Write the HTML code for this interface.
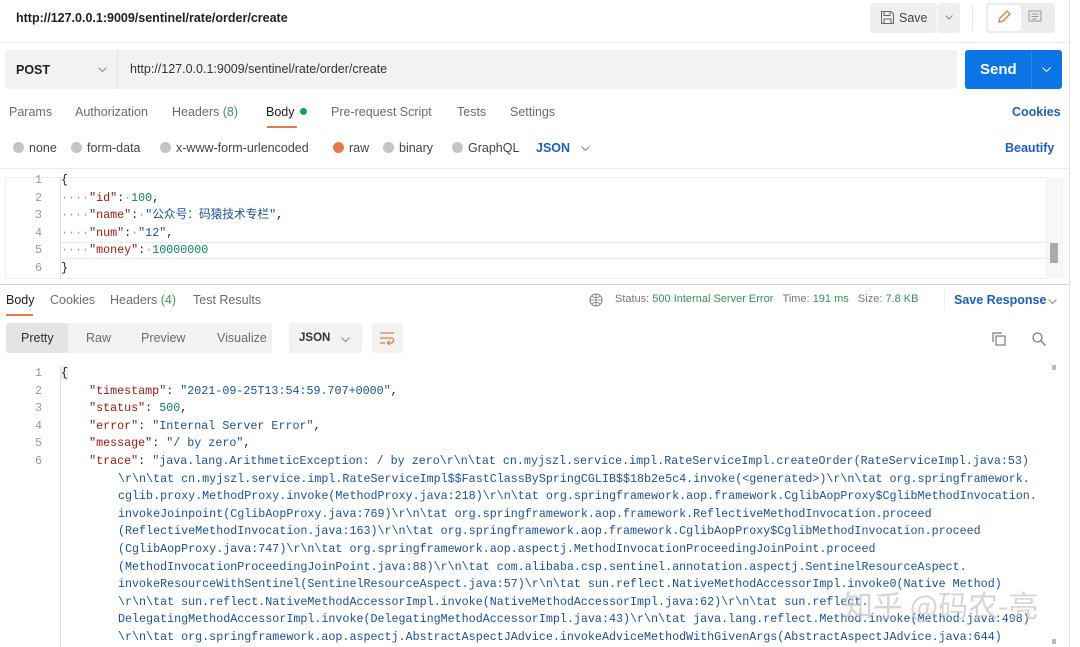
<!DOCTYPE html>
<html><head><meta charset="utf-8"><style>
*{margin:0;padding:0;box-sizing:border-box}
body{width:1080px;height:647px;overflow:hidden;background:#fff;font-family:"Liberation Sans","Noto Sans CJK SC",sans-serif;color:#212121;position:relative}
.a{position:absolute;white-space:nowrap}
.t{font-size:12.5px;color:#6b6b6b}
.m{font-family:"Liberation Mono","Noto Sans CJK SC",monospace;font-size:11.7px;line-height:17.6px}
.k{color:#a31515}.s{color:#1c4f9c}.n{color:#098658}.g{color:#9a9a9a}
.dot{display:inline-block;width:11px;height:11px;border-radius:50%;background:#c4c4c4;vertical-align:-1px;margin-right:5px}
.blue{color:#1d5fbf;font-weight:bold;font-size:12.5px}
.cv{display:inline-block;vertical-align:1px}
</style></head><body>
<div class="a" style="left:1069px;top:0;width:1px;height:647px;background:#e2e2e2"></div>
<div class="a" style="left:16px;top:11px;font-size:12.5px;font-weight:bold">http://127.0.0.1:9009/sentinel/rate/order/create</div>
<div class="a" style="left:870px;top:3px;width:67px;height:30px;background:#efefef;border-radius:3px"></div>
<svg class="a" style="left:880px;top:10px" width="15" height="15" viewBox="0 0 15 15"><path d="M1.5 1.5h9.5l2.5 2.5v9.5h-12z M4 1.5v4h6v-4 M4 13.5v-4.5h7v4.5" fill="none" stroke="#666" stroke-width="1"/></svg>
<div class="a" style="left:899px;top:11px;font-size:12.5px;color:#444">Save</div>
<div class="a" style="left:938px;top:3px;width:22px;height:30px;background:#efefef;border-radius:3px"></div>
<svg class="a" style="left:945px;top:15px" width="8" height="5" viewBox="0 0 8 5"><path d="M.5.5l3.5 3.5 3.5-3.5" fill="none" stroke="#888"/></svg>
<div class="a" style="left:972px;top:6px;width:1px;height:24px;background:#e6e6e6"></div>
<div class="a" style="left:986px;top:3px;width:69px;height:30px;background:#ececec;border-radius:3px"></div>
<div class="a" style="left:988px;top:5px;width:33px;height:26px;background:#fff;border-radius:3px"></div>
<svg class="a" style="left:996px;top:9px" width="16" height="16" viewBox="0 0 16 16"><path d="M3 13l1-4 7-7 3 3-7 7z" fill="none" stroke="#e07a4a" stroke-width="1.3"/></svg>
<svg class="a" style="left:1028px;top:10px" width="14" height="14" viewBox="0 0 14 14"><path d="M1 1h12v10h-12z M3.5 4h7 M3.5 6.5h7 M3.5 9h5" fill="none" stroke="#999" stroke-width="1"/></svg>
<div class="a" style="left:0;top:42px;width:1069px;height:1px;background:#ececec"></div>
<div class="a" style="left:5px;top:50px;width:952px;height:39px;background:#f2f2f2;border-radius:3px"></div>
<div class="a" style="left:117px;top:50px;width:1px;height:39px;background:#e4e4e4"></div>
<div class="a" style="left:16px;top:63px;font-size:12.5px;font-weight:bold">POST</div>
<svg class="a" style="left:98px;top:67px" width="9" height="5" viewBox="0 0 9 5"><path d="M.5.5l4 4 4-4" fill="none" stroke="#888"/></svg>
<div class="a" style="left:130px;top:62px;font-size:12.5px;color:#333">http://127.0.0.1:9009/sentinel/rate/order/create</div>
<div class="a" style="left:965px;top:50px;width:97px;height:39px;background:#0b75e5;border-radius:3px"></div>
<div class="a" style="left:1031px;top:50px;width:1px;height:39px;background:#2e87e8"></div>
<div class="a" style="left:980px;top:61px;font-size:15px;font-weight:bold;color:#fff">Send</div>
<svg class="a" style="left:1042px;top:67px" width="9" height="5" viewBox="0 0 9 5"><path d="M.5.5l4 4 4-4" fill="none" stroke="#fff"/></svg>
<div class="a t" style="left:9px;top:105px">Params</div>
<div class="a t" style="left:75px;top:105px">Authorization</div>
<div class="a t" style="left:172px;top:105px">Headers <span style="color:#3b9a5a">(8)</span></div>
<div class="a" style="left:266px;top:105px;font-size:12.5px;color:#222">Body <span style="display:inline-block;width:7px;height:7px;border-radius:50%;background:#16a34a;vertical-align:1px;margin-left:2px"></span></div>
<div class="a" style="left:267px;top:126px;width:30px;height:2px;background:#e8774a"></div>
<div class="a t" style="left:331px;top:105px">Pre-request Script</div>
<div class="a t" style="left:457px;top:105px">Tests</div>
<div class="a t" style="left:510px;top:105px">Settings</div>
<div class="a blue" style="left:1012px;top:105px">Cookies</div>
<div class="a t" style="left:13px;top:141px;color:#444"><span class="dot"></span>none</div>
<div class="a t" style="left:71px;top:141px;color:#444"><span class="dot"></span>form-data</div>
<div class="a t" style="left:160px;top:141px;color:#444"><span class="dot"></span>x-www-form-urlencoded</div>
<div class="a t" style="left:333px;top:141px;color:#444"><span class="dot" style="background:#e8774a"></span>raw</div>
<div class="a t" style="left:383px;top:141px;color:#444"><span class="dot"></span>binary</div>
<div class="a t" style="left:452px;top:141px;color:#444"><span class="dot"></span>GraphQL</div>
<div class="a blue" style="left:536px;top:141px">JSON</div>
<svg class="a" style="left:581px;top:146px" width="9" height="5" viewBox="0 0 9 5"><path d="M.5.5l4 4 4-4" fill="none" stroke="#888"/></svg>
<div class="a blue" style="left:1005px;top:141px">Beautify</div>
<div class="a" style="left:0;top:168px;width:1069px;height:1px;background:#ececec"></div>
<div class="a" style="left:5px;top:177px;width:1058px;height:102px;border:1px solid #eee"></div>
<div class="a" style="left:60px;top:177px;width:1px;height:102px;background:#ddd"></div>
<div class="a" style="left:1046px;top:177px;width:16px;height:102px;background:#f7f7f7;border-left:1px solid #eee"></div>
<div class="a" style="left:1050px;top:243px;width:8px;height:20px;background:#aaa"></div>
<div class="a" style="left:61px;top:242px;width:985px;height:1px;background:#eaeaea"></div>
<div class="a" style="left:61px;top:258px;width:985px;height:1px;background:#eaeaea"></div>
<div class="a m g" style="left:30px;top:172px;text-align:right;width:12px">1<br>2<br>3<br>4<br>5<br>6</div>
<div class="a m" style="left:61px;top:172px">{<br><span class="g">····</span><span class="k">"id"</span>:<span class="g">·</span><span class="n">100</span>,<br><span class="g">····</span><span class="k">"name"</span>:<span class="g">·</span><span class="s">"公众号：码猿技术专栏"</span>,<br><span class="g">····</span><span class="k">"num"</span>:<span class="g">·</span><span class="s">"12"</span>,<br><span class="g">····</span><span class="k">"money"</span>:<span class="g">·</span><span class="n">10000000</span><br>}</div>
<div class="a" style="left:0;top:284px;width:1069px;height:1px;background:#c9dbe8"></div>
<div class="a" style="left:6px;top:293px;font-size:12.5px;color:#222">Body</div>
<div class="a" style="left:6px;top:314px;width:27px;height:2px;background:#e8774a"></div>
<div class="a t" style="left:50px;top:293px">Cookies</div>
<div class="a t" style="left:110px;top:293px">Headers <span style="color:#3b9a5a">(4)</span></div>
<div class="a t" style="left:193px;top:293px">Test Results</div>
<svg class="a" style="left:589px;top:293px" width="14" height="14" viewBox="0 0 14 14"><circle cx="7" cy="7" r="6" fill="none" stroke="#777"/><path d="M1 7h12M7 1v12M3 3.5q4 2 8 0M3 10.5q4-2 8 0" fill="none" stroke="#777" stroke-width=".8"/></svg>
<div class="a" style="left:615px;top:293px;font-size:11px;color:#777">Status: <span style="color:#3b8f55">500 Internal Server Error</span>&nbsp;&nbsp;&nbsp;Time: <span style="color:#3b8f55">191 ms</span>&nbsp;&nbsp;&nbsp;Size: <span style="color:#3b8f55">7.8 KB</span></div>
<div class="a" style="left:944px;top:290px;width:1px;height:20px;background:#eee"></div>
<div class="a blue" style="left:954px;top:293px">Save Response</div>
<svg class="a" style="left:1048px;top:299px" width="9" height="5" viewBox="0 0 9 5"><path d="M.5.5l4 4 4-4" fill="none" stroke="#888"/></svg>
<div class="a" style="left:6px;top:323px;width:266px;height:30px;background:#f2f2f2;border-radius:3px"></div>
<div class="a" style="left:6px;top:323px;width:62px;height:30px;background:#e4e4e4;border-radius:3px"></div>
<div class="a t" style="left:21px;top:331px;color:#333">Pretty</div>
<div class="a t" style="left:86px;top:331px">Raw</div>
<div class="a t" style="left:141px;top:331px">Preview</div>
<div class="a t" style="left:217px;top:331px">Visualize</div>
<div class="a" style="left:289px;top:323px;width:73px;height:30px;background:#f2f2f2;border-radius:3px"></div>
<div class="a" style="left:299px;top:332px;font-size:11.5px;font-weight:bold;color:#333">JSON</div>
<svg class="a" style="left:341px;top:337px" width="9" height="5" viewBox="0 0 9 5"><path d="M.5.5l4 4 4-4" fill="none" stroke="#888"/></svg>
<div class="a" style="left:372px;top:323px;width:31px;height:30px;background:#f2f2f2;border-radius:3px"></div>
<svg class="a" style="left:378px;top:330px" width="18" height="16" viewBox="0 0 18 16"><path d="M2 3h14M2 8h11a2.5 2.5 0 010 5h-3M11.5 11l-2 2 2 2M2 13h5" fill="none" stroke="#e8774a" stroke-width="1.3"/></svg>
<svg class="a" style="left:991px;top:331px" width="16" height="16" viewBox="0 0 16 16"><path d="M2 11V2h9" fill="none" stroke="#777" stroke-width="1.2"/><rect x="5" y="5" width="9" height="9" fill="none" stroke="#777" stroke-width="1.2"/></svg>
<svg class="a" style="left:1031px;top:331px" width="16" height="16" viewBox="0 0 16 16"><circle cx="6.5" cy="6.5" r="4.5" fill="none" stroke="#777" stroke-width="1.2"/><path d="M10 10l4.5 4.5" stroke="#777" stroke-width="1.3"/></svg>
<div class="a" style="left:60px;top:366px;width:1px;height:281px;background:#ddd"></div>
<div class="a" style="left:1052px;top:365px;width:4px;height:5px;background:#bbb"></div>
<div class="a" style="left:1052px;top:639px;width:4px;height:5px;background:#bbb"></div>
<div class="a m g" style="left:30px;top:365px;text-align:right;width:12px">1<br>2<br>3<br>4<br>5<br>6</div>
<div class="a m" style="left:61px;top:365px"><span style="background:#eee">{</span><br>&nbsp;&nbsp;&nbsp;&nbsp;<span class="k">"timestamp"</span>: <span class="s">"2021-09-25T13:54:59.707+0000"</span>,<br>&nbsp;&nbsp;&nbsp;&nbsp;<span class="k">"status"</span>: <span class="n">500</span>,<br>&nbsp;&nbsp;&nbsp;&nbsp;<span class="k">"error"</span>: <span class="s">"Internal Server Error"</span>,<br>&nbsp;&nbsp;&nbsp;&nbsp;<span class="k">"message"</span>: <span class="s">"/ by zero"</span>,<br>&nbsp;&nbsp;&nbsp;&nbsp;<span class="k">"trace"</span>: <span class="s">"java.lang.ArithmeticException: / by zero\r\n\tat cn.myjszl.service.impl.RateServiceImpl.createOrder(RateServiceImpl.java:53)</span></div>
<div class="a m s" style="left:118px;top:470.6px">\r\n\tat cn.myjszl.service.impl.RateServiceImpl$$FastClassBySpringCGLIB$$18b2e5c4.invoke(&lt;generated&gt;)\r\n\tat org.springframework.<br>cglib.proxy.MethodProxy.invoke(MethodProxy.java:218)\r\n\tat org.springframework.aop.framework.CglibAopProxy$CglibMethodInvocation.<br>invokeJoinpoint(CglibAopProxy.java:769)\r\n\tat org.springframework.aop.framework.ReflectiveMethodInvocation.proceed<br>(ReflectiveMethodInvocation.java:163)\r\n\tat org.springframework.aop.framework.CglibAopProxy$CglibMethodInvocation.proceed<br>(CglibAopProxy.java:747)\r\n\tat org.springframework.aop.aspectj.MethodInvocationProceedingJoinPoint.proceed<br>(MethodInvocationProceedingJoinPoint.java:88)\r\n\tat com.alibaba.csp.sentinel.annotation.aspectj.SentinelResourceAspect.<br>invokeResourceWithSentinel(SentinelResourceAspect.java:57)\r\n\tat sun.reflect.NativeMethodAccessorImpl.invoke0(Native Method)<br>\r\n\tat sun.reflect.NativeMethodAccessorImpl.invoke(NativeMethodAccessorImpl.java:62)\r\n\tat sun.reflect.<br>DelegatingMethodAccessorImpl.invoke(DelegatingMethodAccessorImpl.java:43)\r\n\tat java.lang.reflect.Method.invoke(Method.java:498)<br>\r\n\tat org.springframework.aop.aspectj.AbstractAspectJAdvice.invokeAdviceMethodWithGivenArgs(AbstractAspectJAdvice.java:644)</div>
<div class="a" style="left:843px;top:582px;font-size:30px;color:rgba(200,200,200,.75);font-family:'Noto Sans CJK SC',sans-serif">知乎 @码农-亮</div>
</body></html>
